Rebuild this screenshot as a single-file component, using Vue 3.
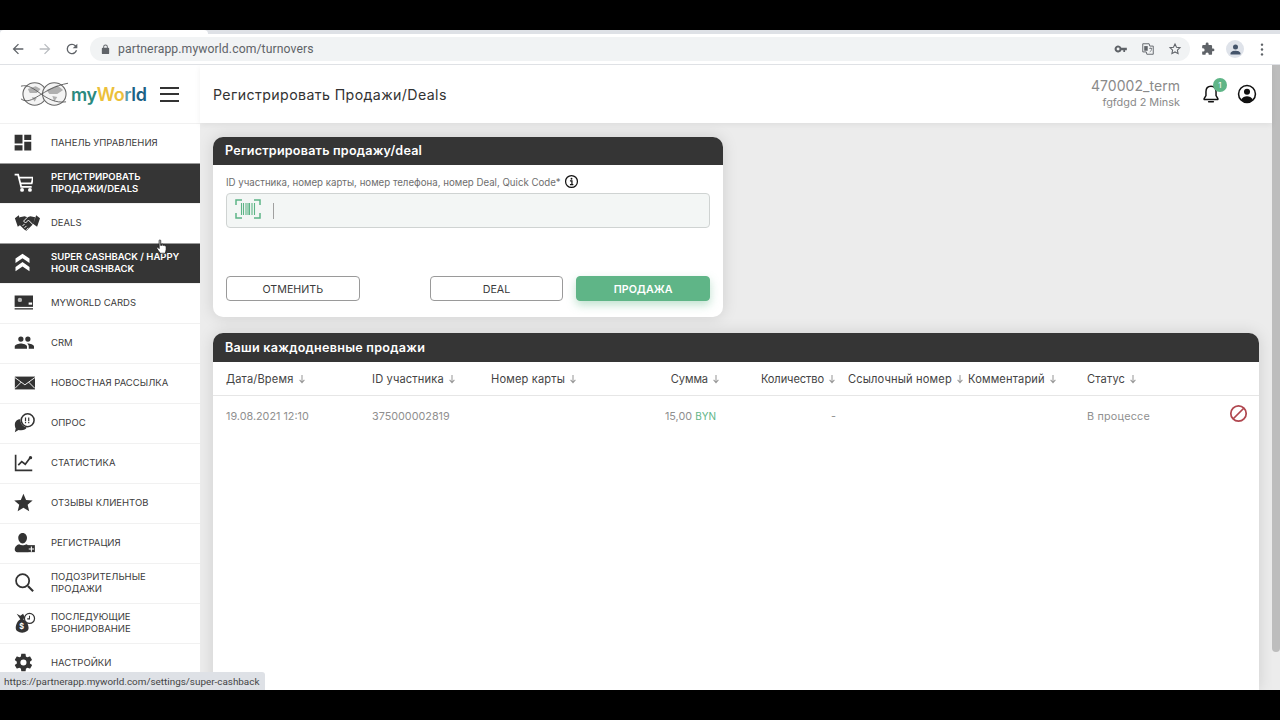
<template>
  <div class="screen">
    <div class="letterbox"></div>

    <div class="tabstrip"><span class="tab-edge"></span></div>
    <div class="toolbar">
      <svg class="nav-ic" viewBox="0 0 24 24"><path d="M20 11H7.800l5.600-5.600L12 4l-8 8 8 8 1.400-1.400L7.800 13H20z" fill="#5f6368" /></svg>
      <svg class="nav-ic" viewBox="0 0 24 24"><path d="M4 11h12.200l-5.600-5.600L12 4l8 8-8 8-1.400-1.400 5.600-5.600H4z" fill="#b9bcc0" /></svg>
      <svg class="nav-ic" viewBox="0 0 24 24"><path d="M17.650 6.350A7.950 7.950 0 0 0 12 4a8 8 0 1 0 7.740 10h-2.080A6 6 0 1 1 12 6c1.660 0 3.140.690 4.220 1.780L13 11h7V4z" fill="#5f6368" /></svg>
      <div class="omnibox">
        <svg class="lock" viewBox="0 0 24 24"><path d="M18 8h-1V6a5 5 0 0 0-10 0v2H6a2 2 0 0 0-2 2v10a2 2 0 0 0 2 2h12a2 2 0 0 0 2-2V10a2 2 0 0 0-2-2zM9 6a3 3 0 0 1 6 0v2H9z" fill="#5f6368" /></svg>
        <span class="url">partnerapp.myworld.com/turnovers</span>
        <svg class="omni-ic" viewBox="0 0 24 24"><path d="M12.600 10a6 6 0 1 0 0 4H16v3h3v-3h3v-4zM7 14.500a2.500 2.500 0 1 1 0-5 2.500 2.500 0 0 1 0 5z" fill="#5f6368" /></svg>
        <svg class="omni-ic" viewBox="0 0 24 24"><path d="M3 3h11l1 4h6v14H10l-1-4H3z" fill="none" stroke="#5f6368" stroke-width="1.600" /><path d="M5.500 7h6v8h-6z" fill="#5f6368" /><path d="M14 11h5M16.500 9.500v1.500M15 17c2-1 3-3 3.300-6" fill="none" stroke="#5f6368" stroke-width="1.200" /></svg>
        <svg class="omni-ic" viewBox="0 0 24 24"><path d="M12 3.500l2.600 5.600 6 .7-4.500 4.100 1.200 6L12 17l-5.300 2.900 1.200-6-4.500-4.100 6-.7z" fill="none" stroke="#5f6368" stroke-width="1.800" /></svg>
      </div>
      <svg class="ext-ic" viewBox="0 0 24 24"><path d="M20.500 11H19V7a2 2 0 0 0-2-2h-4V3.500a2.500 2.500 0 0 0-5 0V5H4a2 2 0 0 0-2 2v3.800h1.500a2.700 2.700 0 0 1 0 5.400H2V20a2 2 0 0 0 2 2h3.800v-1.500a2.700 2.700 0 0 1 5.400 0V22H17a2 2 0 0 0 2-2v-4h1.500a2.500 2.500 0 0 0 0-5z" fill="#5f6368" /></svg>
      <span class="avatar">
        <svg viewBox="0 0 24 24"><path d="M12 12a4 4 0 1 0 0-8 4 4 0 0 0 0 8zm0 2c-2.700 0-8 1.300-8 4v2h16v-2c0-2.700-5.300-4-8-4z" fill="#44546a" /></svg>
      </span>
      <svg class="dots" viewBox="0 0 4 16"><circle cx="2" cy="2" r="1.500" /><circle cx="2" cy="8" r="1.500" /><circle cx="2" cy="14" r="1.500" /></svg>
    </div>

    <div class="app">
      <aside class="sidebar">
        <div class="brand">
          <svg class="globe" viewBox="0 0 50 26">
            <ellipse cx="15" cy="13" rx="12" ry="11.500" fill="#f4f4f4" stroke="#666" stroke-width="1.100" />
            <ellipse cx="35" cy="13" rx="12" ry="11.500" fill="#f4f4f4" stroke="#666" stroke-width="1.100" />
            <path d="M8 8l8-3 5 3-4 4-7 0zM27 9l11-5 6 5-6 4-8 0zM12 16l5 1-2 4zM33 15l5 1-3 5z" fill="#b0b0b0" />
            <path d="M1 18C12 26 22 7 49 2M1 5c14-4 24 19 46 16" fill="none" stroke="#555" stroke-width=".9" />
          </svg>
          <span class="wordmark"><i class="wm-teal">my</i><i class="wm-yellow">Wo</i><i class="wm-sky">r</i><i class="wm-blue">ld</i></span>
          <span class="burger"><b></b><b></b><b></b></span>
        </div>
        <nav>
          <a v-for="item in menu" :key="item.label" class="menu-item" :class="{ dark: item.dark }">
            <span class="menu-ic" v-html="item.icon"></span>
            <span class="menu-label">{{ item.label }}</span>
          </a>
        </nav>
      </aside>

      <div class="main">
        <header class="topbar">
          <h1>Регистрировать Продажи/Deals</h1>
          <div class="account">
            <div class="account-name">470002_term</div>
            <div class="account-shop">fgfdgd 2 Minsk</div>
          </div>
          <div class="bell">
            <svg viewBox="0 0 24 24"><path d="M12 3.500c-3.400 0-5.500 2.500-5.500 6v4.200L4.500 17v1h15v-1l-2-3.300V9.500c0-3.500-2.100-6-5.500-6z" fill="none" stroke="#111" stroke-width="1.600" stroke-linejoin="round" /><path d="M9.500 20.500h5" stroke="#111" stroke-width="1.800" stroke-linecap="round" /></svg>
            <span class="bell-badge">1</span>
          </div>
          <svg class="user-ic" viewBox="0 0 24 24"><circle cx="12" cy="12" r="9.200" fill="none" stroke="#111" stroke-width="1.700" /><circle cx="12" cy="9.500" r="3.300" fill="#111" /><path d="M5.500 18.500c1.500-3 4-4 6.500-4s5 1 6.500 4c-3.500 3.400-9.500 3.400-13 0z" fill="#111" /></svg>
        </header>

        <div class="content">
          <section class="card register">
            <div class="card-head">Регистрировать продажу/deal</div>
            <div class="register-body">
              <div class="field-label">
                <span>ID участника, номер карты, номер телефона, номер Deal, Quick Code*</span>
                <svg class="info" viewBox="0 0 24 24"><circle cx="12" cy="12" r="9.500" fill="none" stroke="#111" stroke-width="2" /><circle cx="12" cy="7.500" r="1.500" fill="#111" /><path d="M9.500 11h3.200v6H15M9.500 17h3" fill="none" stroke="#111" stroke-width="2" /></svg>
              </div>
              <div class="scan-input">
                <svg class="barcode" viewBox="0 0 26 20">
                  <path d="M1 6V1h6M19 1h6v5M1 14v5h6M19 19h6v-5" fill="none" stroke="#5cb486" stroke-width="1.500" />
                  <path d="M6.500 4v12M8.500 4v12M11 4v12M13 4v12M14.500 4v12M17 4v12M19.500 4v12" stroke="#5cb486" stroke-width="1.100" />
                </svg>
                <span class="caret"></span>
              </div>
              <div class="actions">
                <button type="button" class="btn">ОТМЕНИТЬ</button>
                <button type="button" class="btn deal">DEAL</button>
                <button type="button" class="btn primary">ПРОДАЖА</button>
              </div>
            </div>
          </section>

          <section class="card sales">
            <div class="card-head tall">Ваши каждодневные продажи</div>
            <div class="sales-row sales-header">
              <span v-for="col in columns" :key="col.label" :class="{ right: col.right }">
                {{ col.label }} <svg class="sort" viewBox="0 0 10 12"><path d="M5 1v9M2 7l3 3.500L8 7" fill="none" stroke="#999" stroke-width="1.300" /></svg>
              </span>
            </div>
            <div class="sales-row sales-data">
              <span>19.08.2021 12:10</span>
              <span>375000002819</span>
              <span></span>
              <span class="right amount">15,00 <em>BYN</em></span>
              <span class="right dash">-</span>
              <span></span>
              <span></span>
              <span class="status">
                В процессе
                <svg class="cancel" viewBox="0 0 24 24"><circle cx="12" cy="12" r="8.800" fill="none" stroke="#b0474f" stroke-width="2" /><path d="M6 18L18 6" stroke="#b0474f" stroke-width="2" /></svg>
              </span>
            </div>
          </section>
        </div>
      </div>

      <div class="scrollbar"><span class="thumb"></span></div>
    </div>

    <div class="letterbox"></div>

    <div class="status-bubble">https://partnerapp.myworld.com/settings/super-cashback</div>
    <svg class="hand" viewBox="0 0 14 20"><path d="M4 2c0-1.400 2-1.400 2 0v6l1 0V6.800c0-1 1.700-1 1.700 0V8l.8 0V7.500c0-1 1.600-1 1.600 0v1l.5 0c.7-.3 1.400.2 1.400 1V13c0 2-1 3-1 5H5c-.5-1.800-3.500-5-4-6.500-.3-1 1-1.700 1.800-.8L4 12z" fill="#fff" stroke="#111" stroke-width="1" /></svg>
  </div>
</template>

<script setup>
const ic = (body, box = '0 0 24 24', width = 21, height = 21) =>
  `<svg viewBox="${box}" width="${width}" height="${height}">${body}</svg>`

const menu = [
  { label: 'ПАНЕЛЬ УПРАВЛЕНИЯ', icon: ic('<path fill="#333" d="M3 13h9V3H3zm0 8h9v-6H3zm11 0h8V11h-8zm0-18v6h8V3z"/>') },
  { label: 'РЕГИСТРИРОВАТЬ ПРОДАЖИ/DEALS', dark: true, icon: ic('<path fill="none" stroke="#fff" stroke-width="2.100" d="M3 3h4l3.500 14h12M8 6.500h16l-1.500 6.500H9.500"/><circle cx="11.500" cy="20.500" r="2.200" fill="#fff"/><circle cx="20.500" cy="20.500" r="2.200" fill="#fff"/>') },
  { label: 'DEALS', icon: ic('<path fill="#333" d="M0 4L4 1l3 9-4 3zM26 4l-4-3-3 9 4 3zM5 3l5-1 3 1 3-1 5 1-2 7-7 7-2-1-5-5z"/><path fill="none" stroke="#fff" stroke-width="1" d="M13 3L9 7l2 2 3-3 5 5M8 12l2-2M10 14l2-2M12 16l2-2"/>', '-3 0 29 18', 28, 18) },
  { label: 'SUPER CASHBACK / HAPPY HOUR CASHBACK', dark: true, icon: ic('<path fill="#fff" d="M12 2l8 5.500v5L12 7l-8 5.500v-5zM12 11.500l8 5.500v5l-8-5.500L4 22v-5z"/>') },
  { label: 'MYWORLD CARDS', icon: ic('<path fill="#333" d="M3 4h22v13H3z"/><path fill="#333" d="M3 18.500h22V20H3z"/><circle cx="9" cy="9" r="2.500" fill="#bbb"/><path fill="#fff" d="M19 12h4v2.500h-4z"/>') },
  { label: 'CRM', icon: ic('<path fill="#333" d="M16 11a3 3 0 1 0 0-6 3 3 0 0 0 0 6zm-8 0a3 3 0 1 0 0-6 3 3 0 0 0 0 6zm0 2c-2.300 0-7 1.200-7 3.500V19h14v-2.500C15 14.200 10.300 13 8 13zm8 0c-.3 0-.6 0-1 .05 1.200.85 2 2 2 3.450V19h6v-2.500c0-2.300-4.700-3.500-7-3.500z"/>', '-2 0 26 24', 23, 21) },
  { label: 'НОВОСТНАЯ РАССЫЛКА', icon: ic('<path fill="#333" d="M1 5h22v14H1z"/><path fill="none" stroke="#fff" stroke-width="1" d="M1 6l11 8 11-8M1 18l7-7M23 18l-7-7"/>', '-2 0 26 24', 24, 22) },
  { label: 'ОПРОС', icon: ic('<path fill="#333" d="M1 14c0-4 3-6 6-6 0 5 3 8 7 9-1 2-3 3-6 3-1 0-2 0-3-.5L1 22l1-4c-.6-1-1-2.500-1-4z"/><circle cx="15" cy="9" r="7" fill="#fff" stroke="#333" stroke-width="1.700"/><path fill="#333" d="M12 6h1.300v4H12zm3.500 0h1.300v4h-1.300zM12 11h1.300v1.300H12zm3.500 0h1.300v1.300h-1.300z"/>', '-2 0 26 24', 24, 22) },
  { label: 'СТАТИСТИКА', icon: ic('<path fill="none" stroke="#333" stroke-width="1.900" d="M2 3v18h19"/><path fill="none" stroke="#333" stroke-width="1.900" d="M5 15l4-4 4 3 6-8"/><circle cx="19" cy="6.500" r="1.900" fill="#333"/>', '-2 0 26 24', 23, 21) },
  { label: 'ОТЗЫВЫ КЛИЕНТОВ', icon: ic('<path fill="#333" d="M12 2l3 7 7.500.6-5.700 5 1.800 7.400L12 18l-6.600 4 1.800-7.400-5.700-5L9 9z"/>', '-1 0 25 24', 22, 21) },
  { label: 'РЕГИСТРАЦИЯ', icon: ic('<path fill="#333" d="M10 1c3 0 5 2.500 5 5.500S13 13 10 13 5 9.500 5 6.500 7 1 10 1zM1 20c0-3.500 3-5.500 5-6 2 1.500 6 1.500 8 0 1 .3 2 1 2.500 1.500V23H4c-2 0-3-1.500-3-3z"/><path fill="#333" d="M16 15h8v8h-8z"/><path fill="#fff" d="M19.400 16.500h1.200v2.400H23v1.200h-2.400v2.400h-1.200v-2.400H17v-1.200h2.400z"/>', '-2 0 26 24', 23, 21) },
  { label: 'ПОДОЗРИТЕЛЬНЫЕ ПРОДАЖИ', icon: ic('<circle cx="10" cy="10" r="7.500" fill="none" stroke="#333" stroke-width="2"/><path stroke="#333" stroke-width="2.400" d="M16 16l6 6"/>', '-2 0 26 24', 23, 21) },
  { label: 'ПОСЛЕДУЮЩИЕ БРОНИРОВАНИЕ', icon: ic('<path fill="#333" d="M3 2l4 2 3-2 2 4-2 2c4 1.500 6 6 6 9.500 0 3-3 5-7 5s-7-2-7-5C2 14 4 9.500 7 8z"/><circle cx="17" cy="7" r="5.500" fill="#fff" stroke="#333" stroke-width="1.300"/><path fill="none" stroke="#333" stroke-width="1.100" d="M17 4v3.500h-2.500"/><text x="8.500" y="19" font-size="8" font-weight="700" fill="#fff" text-anchor="middle" font-family="Inter, sans-serif">$</text>', '-2 0 26 24', 24, 22) },
  { label: 'НАСТРОЙКИ', icon: ic('<path fill="#333" d="M19.400 13c.05-.3.1-.65.1-1s-.05-.7-.1-1l2.100-1.650c.2-.15.25-.4.1-.65l-2-3.450c-.1-.2-.4-.3-.6-.2l-2.500 1a7.300 7.300 0 0 0-1.700-1l-.4-2.650A.5.500 0 0 0 14 2h-4c-.25 0-.45.2-.5.4l-.4 2.650c-.6.25-1.150.6-1.700 1l-2.500-1c-.2-.1-.5 0-.6.2l-2 3.450c-.15.25-.1.5.1.65L4.500 11c-.05.3-.1.65-.1 1s.05.7.1 1l-2.100 1.650c-.2.15-.25.4-.1.65l2 3.450c.1.2.4.3.6.2l2.500-1c.55.4 1.100.75 1.700 1l.4 2.650c.05.2.25.4.5.4h4c.25 0 .45-.2.5-.4l.4-2.650c.6-.25 1.150-.6 1.700-1l2.500 1c.2.1.5 0 .6-.2l2-3.450c.15-.25.1-.5-.1-.65zM12 15.500a3.500 3.500 0 1 1 0-7 3.500 3.500 0 0 1 0 7z"/>', '-1 0 25 24', 22, 21) },
]

const columns = [
  { label: 'Дата/Время' },
  { label: 'ID участника' },
  { label: 'Номер карты' },
  { label: 'Сумма', right: true },
  { label: 'Количество', right: true },
  { label: 'Ссылочный номер' },
  { label: 'Комментарий' },
  { label: 'Статус' },
]
</script>

<style>
html, body { margin: 0; background: #000; overflow: hidden; }
</style>

<style scoped>
* { box-sizing: border-box; }

.screen {
  position: relative;
  display: flex;
  flex-direction: column;
  width: 1280px;
  height: 720px;
  overflow: hidden;
  font-family: Inter, "Noto Sans", sans-serif;
  color: #333;
  background: #000;
}

.letterbox { flex: 0 0 30px; background: #000; position: relative; z-index: 2; }

.tabstrip { flex: 0 0 4px; background: #dee1e6; }
.tab-edge { display: block; width: 208px; height: 4px; background: #fff; border-radius: 4px 4px 0 0; }

.toolbar {
  flex: 0 0 31px;
  display: flex;
  align-items: center;
  padding-left: 10px;
  background: #fff;
  border-bottom: 1px solid #dfe1e5;
}
.nav-ic { width: 16px; height: 16px; margin-right: 11px; }
.nav-ic:nth-child(3) { margin-right: 10px; }

.omnibox {
  flex: 0 0 1100px;
  height: 24px;
  display: flex;
  align-items: center;
  padding: 0 8px 0 10px;
  background: #f1f3f4;
  border-radius: 12px;
}
.lock { width: 11px; height: 11px; margin-right: 7px; }
.url { flex: 1; font: 12.2px "Roboto", sans-serif; color: #5f6368; letter-spacing: 0.1px; }
.omni-ic { width: 14px; height: 14px; margin-left: 13px; }
.ext-ic { width: 14px; height: 14px; margin-left: 11px; }
.avatar {
  display: flex;
  align-items: center;
  justify-content: center;
  width: 18px;
  height: 18px;
  margin-left: 11px;
  background: #dfe3ea;
  border-radius: 50%;
}
.avatar svg { width: 15px; height: 15px; }
.dots { width: 4px; height: 13px; margin-left: 16px; fill: #5f6368; }

.app { flex: 1; display: flex; min-height: 0; overflow: hidden; }

.sidebar { flex: 0 0 200px; position: relative; z-index: 1; background: #fff; overflow: hidden; }
.brand {
  display: flex;
  align-items: center;
  height: 58px;
  padding-left: 20px;
}
.globe { width: 49px; height: 26px; flex: none; }
.wordmark {
  margin-left: 2px;
  font: 600 18px "Inter", sans-serif;
  letter-spacing: -0.4px;
}
.wordmark i { font-style: normal; }
.wm-teal { color: #2a8a80; }
.wm-yellow { color: #ecc03a; }
.wm-sky { color: #5a9fb0; }
.wm-blue { color: #1b6285; }
.burger { display: grid; gap: 4.500px; margin-left: 13px; }
.burger b { display: block; width: 19px; height: 2px; background: #333; }

.menu-item {
  display: flex;
  align-items: center;
  height: 40px;
  padding: 0 12px 2px 12px;
  border-top: 1px solid #f1f1f1;
  background: #fff;
  color: #3c3c3c;
}
.menu-item.dark { background: #353535; color: #fff; font-weight: 600; border-top-color: #9a9a9a; }
.menu-ic { flex: 0 0 39px; display: flex; align-items: center; }
.menu-ic :deep(svg) { display: block; }
.menu-label { font-size: 9.500px; line-height: 12px; }

.main { flex: 1; min-width: 0; display: flex; flex-direction: column; background: #ececec; }

.topbar {
  position: relative;
  z-index: 1;
  flex: 0 0 58px;
  display: flex;
  align-items: center;
  padding: 0 14px 0 13px;
  background: #fff;
  box-shadow: 0 2px 6px rgba(0, 0, 0, 0.06);
}
h1 { flex: 1; margin: 0; font-size: 14.200px; font-weight: 400; color: #333; letter-spacing: 0.38px; }
.account { text-align: right; color: #8a8a8a; margin-right: 20px; margin-top: -2px; }
.account-name { font-size: 14px; line-height: 18px; letter-spacing: 0.05px; }
.account-shop { font-size: 10.900px; line-height: 15px; }
.bell { position: relative; width: 22px; height: 22px; margin-right: 14px; }
.bell svg { width: 22px; height: 22px; display: block; }
.bell-badge {
  position: absolute;
  top: -5px;
  right: -5px;
  width: 14px;
  height: 14px;
  border-radius: 50%;
  background: #5fb587;
  color: #fff;
  font-size: 8px;
  line-height: 14px;
  text-align: center;
}
.user-ic { width: 22px; height: 22px; }

.content {
  flex: 1;
  min-height: 0;
  display: flex;
  flex-direction: column;
  gap: 16px;
  padding: 14px 13px 0 13px;
}

.card {
  background: #fff;
  border-radius: 10px 10px 0 0;
  overflow: hidden;
  box-shadow: 0 0 16px rgba(0, 0, 0, 0.13);
}
.card-head {
  height: 28px;
  padding-left: 12px;
  background: #353535;
  color: #fff;
  font-size: 12.600px;
  font-weight: 600;
  line-height: 28px;
  letter-spacing: 0.2px;
}
.card-head.tall { height: 29px; line-height: 29px; letter-spacing: 0.25px; }

.register { flex: 0 0 180px; width: 510px; border-radius: 10px; }
.register-body { padding: 0 13px; }
.field-label {
  display: flex;
  align-items: center;
  height: 28px;
  gap: 3px;
  padding-top: 6px;
  font-size: 9.680px;
  color: #6e6e6e;
}
.info { width: 15px; height: 15px; margin-top: -2px; }
.scan-input {
  display: flex;
  align-items: center;
  height: 35px;
  padding-left: 8px;
  background: #f3f6f5;
  border: 1px solid #cfd3d2;
  border-radius: 4px;
}
.barcode { width: 26px; height: 20px; margin-top: -3px; }
.caret { width: 1px; height: 16px; margin-left: 12px; background: #a0a0a0; }
.actions { display: flex; gap: 13px; margin-top: 48px; }
.btn {
  width: 134px;
  height: 25px;
  padding: 1px 0 0;
  background: #fff;
  border: 1px solid #9a9a9a;
  border-radius: 4px;
  color: #3a3a3a;
  font: 400 10.700px Inter, sans-serif;
}
.deal { margin-left: 57px; }
.primary {
  background: #5fb587;
  border-color: #5fb587;
  color: #fff;
  font-weight: 600;
  box-shadow: 0 4px 10px rgba(95, 181, 135, 0.4);
}

.sales { flex: 1; min-height: 0; }
.sales-row {
  display: grid;
  grid-template-columns: 146px 119px 113px 116px 128px 120px 119px 1fr;
  align-items: center;
  padding: 0 11px 0 13px;
}
.sales-header {
  height: 34px;
  border-bottom: 1px solid #e6e6e6;
  font-size: 11.100px;
  letter-spacing: 0.15px;
  color: #444;
  white-space: nowrap;
}
.sales-header .right { letter-spacing: -0.1px; }
.sales-data { height: 40px; font-size: 10.800px; color: #8f8f8f; }
.sales-row .right { text-align: right; }
.sales-row .right:nth-child(5) { padding-right: 12px; }
.sales-data .amount { padding-right: 4px; }
.sales-data em { font-style: normal; color: #5fb587; font-size: 10px; }
.sort { width: 8px; height: 10px; margin-left: 1px; vertical-align: -1px; }
.status { display: flex; align-items: center; justify-content: space-between; letter-spacing: 0.2px; }
.cancel { width: 21px; height: 21px; margin: -5px -1px 0 0; }

.scrollbar { flex: 0 0 8px; background: #ececec; }
.thumb { display: block; height: 587px; background: #bdbdbd; border-radius: 0 0 4px 4px; }

.status-bubble {
  position: absolute;
  left: 0;
  top: 672px;
  width: 265px;
  height: 18px;
  padding: 1px 0 0 4px;
  background: #dee1e6;
  border-top-right-radius: 3px;
  color: #444;
  font: 9.900px/18px "Roboto", sans-serif;
  white-space: nowrap;
  z-index: 3;
}
.hand { position: absolute; left: 156px; top: 239px; width: 11px; height: 16px; z-index: 3; }
</style>
